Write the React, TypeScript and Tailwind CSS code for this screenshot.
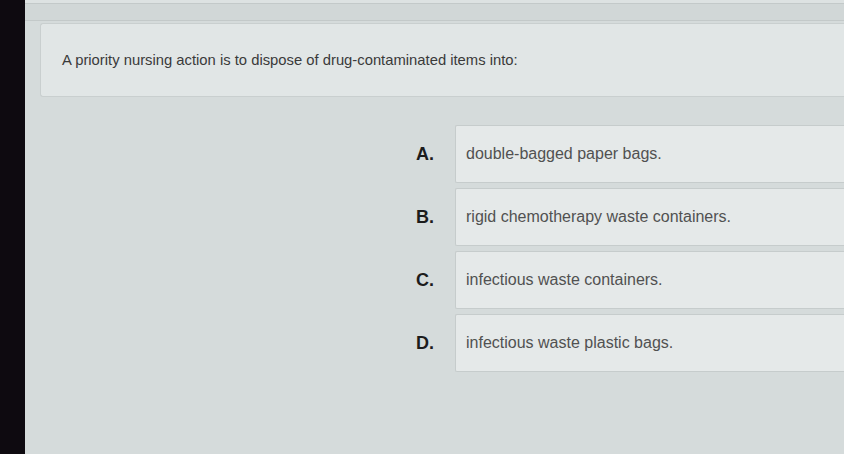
import React from 'react';

const options = [
  { letter: 'A.', text: 'double-bagged paper bags.' },
  { letter: 'B.', text: 'rigid chemotherapy waste containers.' },
  { letter: 'C.', text: 'infectious waste containers.' },
  { letter: 'D.', text: 'infectious waste plastic bags.' },
];

export default function App() {
  return (
    <div className="flex w-[844px] h-[454px] overflow-hidden bg-[#d5dbdb] font-['Liberation_Sans',Arial,sans-serif]">
      <div className="w-[25px] shrink-0 bg-[#0e0a10]" />
      <div className="flex-1 flex flex-col min-w-0">
        <div className="h-[3px] bg-[#dde2e2]" />
        <div className="h-[18px] border-y border-[#c3c9c9] bg-[#d1d7d7]" />
        <div className="ml-[15px] mt-[2px] h-[74px] flex items-center pl-[21px] bg-[#e1e6e6] border-y border-l border-[#c9cfcf] rounded-l-[3px]">
          <p className="text-[14.8px] text-[#3a3a3a]">
            A priority nursing action is to dispose of drug-contaminated items into:
          </p>
        </div>
        <div className="flex flex-col gap-[5px] pl-[391px] mt-[28px]">
          {options.map((o) => (
            <div key={o.letter} className="flex items-center">
              <span className="w-[39px] shrink-0 text-[18px] font-bold text-[#1c1c1c]">{o.letter}</span>
              <div className="flex-1 h-[58px] flex items-center pl-[10px] bg-[#e5e9e9] border-y border-l border-[#c6cccc] rounded-l-[2px]">
                <span className="text-[16px] text-[#515151]">{o.text}</span>
              </div>
            </div>
          ))}
        </div>
      </div>
    </div>
  );
}
